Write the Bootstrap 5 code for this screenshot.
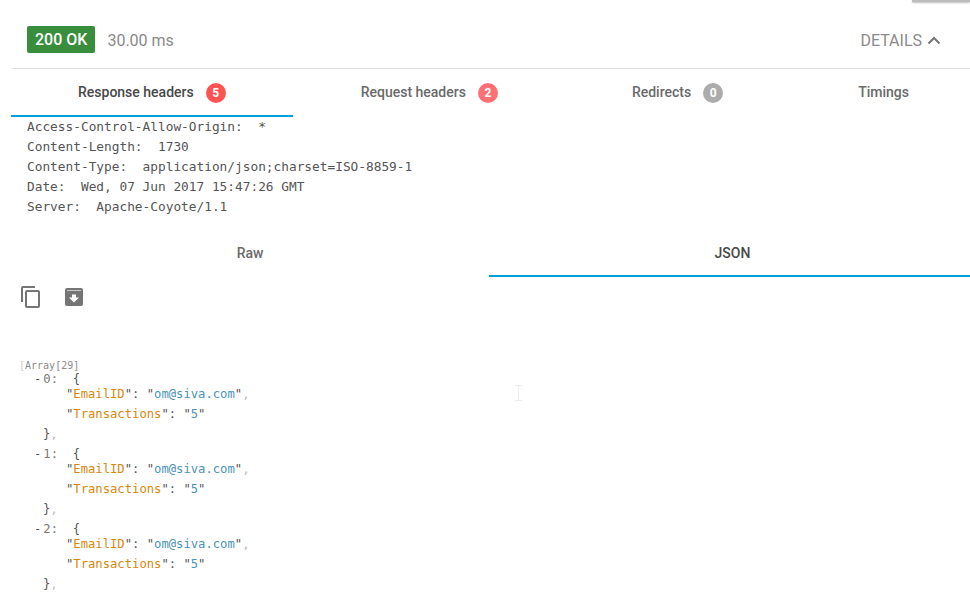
<!DOCTYPE html>
<html lang="en">
<head>
<meta charset="utf-8">
<title>Response</title>
<link href="https://cdn.jsdelivr.net/npm/bootstrap@5.3.0/dist/css/bootstrap.min.css" rel="stylesheet">
<style>
html,body{height:595px;overflow:hidden;background:#fff}
body{font-family:Roboto,"Liberation Sans",sans-serif;position:relative}
.corner-shade{position:absolute;top:0;right:0;width:58px;height:2px;background:#bdbdbd;box-shadow:0 1px 2px rgba(0,0,0,.25)}
.status-bar{height:69px;margin-left:11px;padding:13px 29px 2px 16px;border-bottom:1px solid #e0e0e0}
.status-chip{background:#388e3c;color:#fff;font-size:16px;font-weight:500;line-height:28px;height:27px;padding:0 8px;border-radius:2px}
.status-time{color:#8a8a8a;font-size:16px;margin-left:12px;padding-top:2px}
.details-toggle{color:#8a8a8a;font-size:16px;line-height:24px;text-transform:uppercase;padding-top:2px}
.details-toggle svg{margin-left:5px}
.tab-strip{margin-left:11px;flex-wrap:nowrap;width:970px}
.tab-strip .tab-item{flex:none;height:48px;padding:0 67px;color:#6a6a6a;font-size:14px;font-weight:500;white-space:nowrap;border-bottom:2px solid transparent;display:flex;align-items:center;justify-content:center}
.tab-strip .tab-item:nth-child(2),.tab-strip .tab-item:nth-child(4){padding-left:68px}
.tab-strip .tab-item.is-on{color:#484848;border-bottom-color:#00a0dc}
.count-dot{width:20px;height:20px;border-radius:50%;color:#fff;font-size:12px;font-weight:700;margin-left:12px;display:flex;align-items:center;justify-content:center;margin-top:1px}
.dot-a{background:#ff5252}.dot-b{background:#ff7075}.dot-c{background:#acacac}
.header-lines{margin:0 0 0 27px;height:119px;font-family:"DejaVu Sans Mono","Liberation Mono",monospace;font-size:12.8px;line-height:20px;color:#555;white-space:pre}
.body-tabs{margin-left:11px;width:965px;height:41px}
.body-tabs .tab-half{flex:none;height:41px;width:478px;color:#6a6a6a;font-size:14px;font-weight:500;text-align:center;line-height:35px;border-bottom:2px solid transparent}
.body-tabs .tab-half+.tab-half{width:487px}
.body-tabs .tab-half.is-on{color:#484848;border-bottom-color:#00a0dc}
.tool-row{height:42px;padding:8px 0 0 20px;gap:23px}
.tool-row svg+svg{margin-top:3px}
.json-view{margin:39px 0 0 19px;font-family:"DejaVu Sans Mono","Liberation Mono",monospace;font-size:12.2px;color:#555}
.json-line{height:20px;line-height:20px;white-space:pre}
.json-line.idx-line{height:15px;padding-left:15px}
.json-line.kv{padding-left:47px}
.json-line.end{padding-left:24px}
.arr{font-size:10px;line-height:16px;height:11px;color:#8a8a8a}
.arr i{font-style:normal;color:#ccc}
.dash{margin-right:2px}
.idx{color:#777}
.k{color:#d8880f}.s{color:#4b93b8}.p{color:#bbb}
.caret-mark{position:absolute;left:515px;top:385px}
</style>
</head>
<body>
<div class="corner-shade"></div>
<div class="status-bar d-flex align-items-center justify-content-between">
  <div class="d-flex align-items-center"><span class="status-chip">200 OK</span><span class="status-time">30.00 ms</span></div>
  <div class="details-toggle d-flex align-items-center">Details<svg width="14" height="9" viewBox="0 0 14 9" aria-hidden="true"><path d="M1.5 7.5 7 2l5.5 5.5" fill="none" stroke="#757575" stroke-width="2"/></svg></div>
</div>
<div class="tab-strip d-flex">
  <div class="tab-item is-on">Response headers<span class="count-dot dot-a">5</span></div>
  <div class="tab-item">Request headers<span class="count-dot dot-b">2</span></div>
  <div class="tab-item">Redirects<span class="count-dot dot-c">0</span></div>
  <div class="tab-item">Timings</div>
</div>
<div class="header-lines">Access-Control-Allow-Origin:  *
Content-Length:  1730
Content-Type:  application/json;charset=ISO-8859-1
Date:  Wed, 07 Jun 2017 15:47:26 GMT
Server:  Apache-Coyote/1.1</div>
<div class="body-tabs d-flex">
  <div class="tab-half">Raw</div>
  <div class="tab-half is-on">JSON</div>
</div>
<div class="tool-row d-flex align-items-start">
  <svg width="22" height="24" viewBox="0 0 22 24" aria-hidden="true"><path d="M15 1H3a2 2 0 0 0-2 2v14h2V3h12V1z" fill="#757575"/><path d="M7 5h11a2 2 0 0 1 2 2v14a2 2 0 0 1-2 2H7a2 2 0 0 1-2-2V7a2 2 0 0 1 2-2zm0 2v14h11V7H7z" fill="#757575" fill-rule="evenodd"/></svg>
  <svg width="18" height="18" viewBox="0 0 18 18" aria-hidden="true"><path d="M2 0h14a2 2 0 0 1 2 2v14a2 2 0 0 1-2 2H2a2 2 0 0 1-2-2V2a2 2 0 0 1 2-2z" fill="#757575"/><path d="M2 2.5h14" stroke="#fff" stroke-width="1" opacity=".6"/><path d="M7 6.5h4v3h3l-5 5-5-5h3z" fill="#fff"/></svg>
</div>
<div class="json-view">
  <div class="arr"><i>[</i>Array[29]</div>
  <div class="json-line idx-line"><span class="dash">-</span><span class="idx">0:</span>  {</div>
  <div class="json-line kv">"<span class="k">EmailID</span>": "<span class="s">om@siva.com</span>"<span class="p">,</span></div>
  <div class="json-line kv">"<span class="k">Transactions</span>": "<span class="s">5</span>"</div>
  <div class="json-line end">}<span class="p">,</span></div>
  <div class="json-line idx-line"><span class="dash">-</span><span class="idx">1:</span>  {</div>
  <div class="json-line kv">"<span class="k">EmailID</span>": "<span class="s">om@siva.com</span>"<span class="p">,</span></div>
  <div class="json-line kv">"<span class="k">Transactions</span>": "<span class="s">5</span>"</div>
  <div class="json-line end">}<span class="p">,</span></div>
  <div class="json-line idx-line"><span class="dash">-</span><span class="idx">2:</span>  {</div>
  <div class="json-line kv">"<span class="k">EmailID</span>": "<span class="s">om@siva.com</span>"<span class="p">,</span></div>
  <div class="json-line kv">"<span class="k">Transactions</span>": "<span class="s">5</span>"</div>
  <div class="json-line end">}<span class="p">,</span></div>
</div>
<svg class="caret-mark" width="7" height="16" viewBox="0 0 7 16" aria-hidden="true"><path d="M0 .5h7M3.5 .5v15M0 15.5h7" stroke="#ececec" fill="none"/></svg>
<script src="https://cdn.jsdelivr.net/npm/bootstrap@5.3.0/dist/js/bootstrap.bundle.min.js"></script>
</body>
</html>
